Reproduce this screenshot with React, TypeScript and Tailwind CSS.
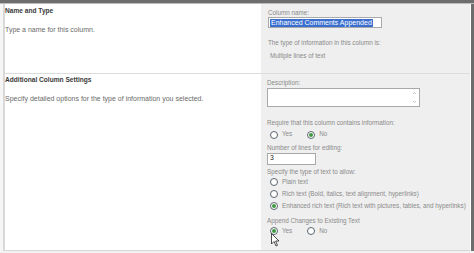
import React from "react";

const Radio = ({ checked }: { checked?: boolean }) => (
  <span className="flex h-[8px] w-[8px] items-center justify-center rounded-full border border-[#5a6470] bg-white">
    {checked && <span className="h-[4px] w-[4px] rounded-full bg-[#3f9a3f]" />}
  </span>
);

const Opt = ({ checked, label }: { checked?: boolean; label: string }) => (
  <div className="flex items-center gap-[4px]">
    <Radio checked={checked} />
    <span>{label}</span>
  </div>
);

export default function App() {
  return (
    <div
      className="relative h-[253px] w-[474px] overflow-hidden bg-[#f2f2f2] text-[6.3px] leading-none"
      style={{ fontFamily: '"Liberation Sans", Arial, sans-serif' }}
    >
      <div className="h-[3px] bg-[#6d6d6d]" />
      <div className="h-[1px] bg-[#bdbdbd]" />
      <div className="flex h-[247px]">
        <div className="w-[3px] bg-[#f6f6f6]" />
        <div className="w-[2px] bg-[#d9d9d9]" />
        <div className="flex w-[465px] flex-col">
          {/* Row 1 */}
          <div className="flex h-[70px] border-b border-[#dcdcdc]">
            <div className="w-[256px] bg-white pl-[0px] pt-[4px]">
              <div className="text-[6.6px] font-bold text-[#3a3a3a]">Name and Type</div>
              <div className="mt-[11px] text-[7px] text-[#6a6a6a]">Type a name for this column.</div>
            </div>
            <div className="flex-1 bg-[#efefef] pl-[7px] pt-[6px] text-[#8a8a8a]">
              <div>Column name:</div>
              <div className="mt-[1px] flex h-[11px] w-[114px] items-center border border-[#a9a9a9] bg-white px-[1px]">
                <span className="bg-[#3a6fd0] px-[1px] text-[7px] leading-[8px] text-white">
                  Enhanced Comments Appended
                </span>
              </div>
              <div className="mt-[12px]">The type of information in this column is:</div>
              <div className="mt-[6px] pl-[2px]">Multiple lines of text</div>
            </div>
          </div>
          {/* Row 2 */}
          <div className="flex flex-1 border-b border-[#d6d6d6]">
            <div className="w-[256px] bg-white pt-[3px]">
              <div className="text-[6.6px] font-bold text-[#3a3a3a]">Additional Column Settings</div>
              <div className="mt-[11px] text-[7px] text-[#6a6a6a]">
                Specify detailed options for the type of information you selected.
              </div>
            </div>
            <div className="flex-1 bg-[#efefef] pl-[6px] pt-[6px] text-[#8a8a8a]">
              <div>Description:</div>
              <div className="relative mt-[2px] h-[19px] w-[153px] border border-[#a9a9a9] bg-white">
                <svg className="absolute right-[2px] top-[2px]" width="5" height="13" viewBox="0 0 5 13">
                  <path d="M1 3 L2.5 1.5 L4 3" fill="none" stroke="#b0b0b0" strokeWidth="0.8" />
                  <path d="M1 10 L2.5 11.5 L4 10" fill="none" stroke="#b0b0b0" strokeWidth="0.8" />
                </svg>
              </div>
              <div className="mt-[13px]">Require that this column contains information:</div>
              <div className="mt-[4px] flex gap-[15px] pl-[3px]">
                <Opt label="Yes" />
                <Opt checked label="No" />
              </div>
              <div className="mt-[6px]">Number of lines for editing:</div>
              <div className="mt-[2px] flex h-[12px] w-[49px] items-center border border-[#a9a9a9] bg-white pl-[2px] text-[6.8px] text-[#222]">
                3
              </div>
              <div className="mt-[4px]">Specify the type of text to allow:</div>
              <div className="mt-[3px] flex flex-col gap-[4px] pl-[3px]">
                <Opt label="Plain text" />
                <Opt label="Rich text (Bold, italics, text alignment, hyperlinks)" />
                <Opt checked label="Enhanced rich text (Rich text with pictures, tables, and hyperlinks)" />
              </div>
              <div className="mt-[8px]">Append Changes to Existing Text</div>
              <div className="mt-[3px] flex gap-[15px] pl-[3px]">
                <Opt checked label="Yes" />
                <Opt label="No" />
              </div>
            </div>
          </div>
        </div>
        <div className="w-[1px] bg-white" />
        <div className="w-[3px] bg-[#6d6d6d]" />
      </div>
      {/* mouse cursor */}
      <svg className="absolute left-[271px] top-[233px]" width="9" height="14" viewBox="0 0 9 14">
        <path d="M0.5 0.5 L0.5 11 L3 8.5 L5 13 L6.5 12.3 L4.6 8 L8 8 Z" fill="white" stroke="#222" strokeWidth="0.8" />
      </svg>
    </div>
  );
}
